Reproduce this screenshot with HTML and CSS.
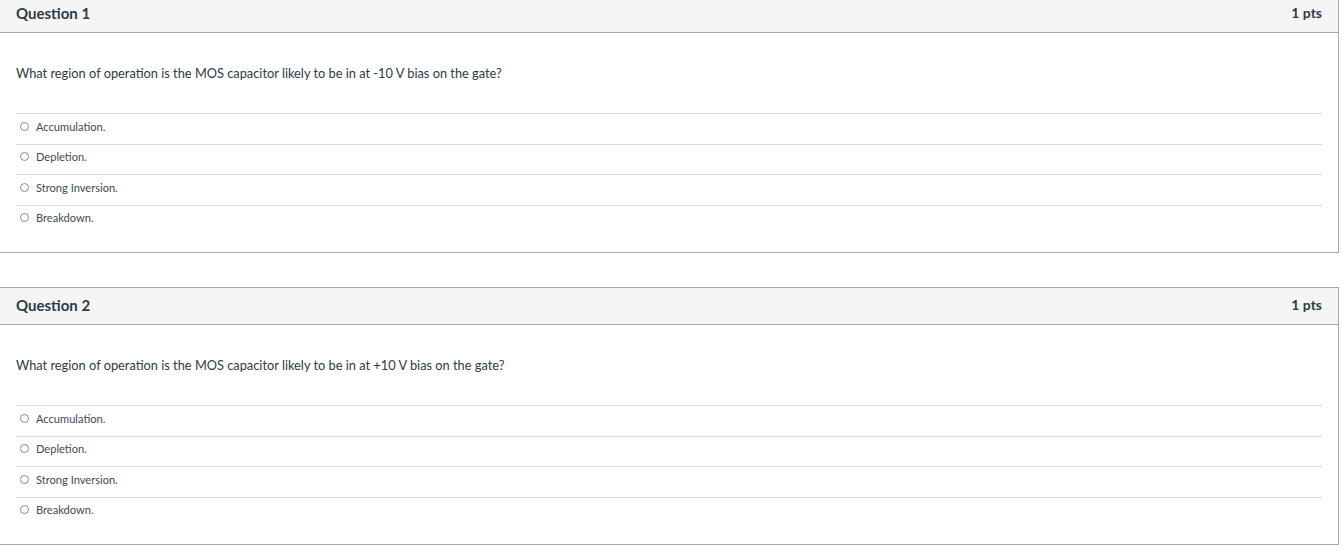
FILE: index.html
```html
<!DOCTYPE html>
<html>
<head>
<meta charset="utf-8">
<link rel="stylesheet" href="styles.css">
</head>
<body>
<div class="quiz">
  <div class="question first">
    <div class="q-header">
      <span class="q-name">Question 1</span>
      <span class="q-pts">1 pts</span>
    </div>
    <div class="q-body">
      <div class="q-text">What region of operation is the MOS capacitor likely to be in at -10 V bias on the gate?</div>
      <div class="answers">
        <div class="answer"><span class="radio"></span><span class="label">Accumulation.</span></div>
        <div class="answer"><span class="radio"></span><span class="label">Depletion.</span></div>
        <div class="answer"><span class="radio"></span><span class="label">Strong Inversion.</span></div>
        <div class="answer"><span class="radio"></span><span class="label">Breakdown.</span></div>
      </div>
    </div>
  </div>
  <div class="question">
    <div class="q-header">
      <span class="q-name">Question 2</span>
      <span class="q-pts">1 pts</span>
    </div>
    <div class="q-body">
      <div class="q-text">What region of operation is the MOS capacitor likely to be in at +10 V bias on the gate?</div>
      <div class="answers">
        <div class="answer"><span class="radio"></span><span class="label">Accumulation.</span></div>
        <div class="answer"><span class="radio"></span><span class="label">Depletion.</span></div>
        <div class="answer"><span class="radio"></span><span class="label">Strong Inversion.</span></div>
        <div class="answer"><span class="radio"></span><span class="label">Breakdown.</span></div>
      </div>
    </div>
  </div>
</div>
</body>
</html>
```
FILE: styles.css
```css
html, body {
  margin: 0;
  padding: 0;
  background: #ffffff;
}
body {
  font-family: Lato, "Open Sans", "Liberation Sans", sans-serif;
  color: #2d3b45;
  overflow: hidden;
}
.quiz {
  display: flex;
  flex-direction: column;
  gap: 34px;
  width: 1340px;
  margin-left: -1px;
  margin-top: -5px;
}
.question {
  border: 1px solid #a8a8a8;
  background: #fff;
}
.q-header {
  display: flex;
  justify-content: space-between;
  align-items: center;
  box-sizing: border-box;
  height: 37px;
  padding: 0 16px 3px 16px;
  background: #f5f5f5;
  border-bottom: 1px solid #a8a8a8;
  font-weight: 700;
  font-size: 15px;
  color: #2d3b45;
}
.q-pts {
  font-size: 14px;
}
.q-body {
  padding: 30px 16px 17px 16px;
}
.q-text {
  font-size: 12.8px;
  line-height: 20px;
  height: 20px;
  margin-bottom: 30px;
}
.answer {
  display: flex;
  align-items: center;
  box-sizing: border-box;
  height: 30.5px;
  padding-bottom: 5px;
  border-top: 1px solid #dcdcdc;
  font-size: 11.1px;
}
.radio {
  width: 9px;
  height: 9px;
  box-sizing: border-box;
  border: 1px solid #8c8c8c;
  border-radius: 50%;
  margin-left: 4px;
  margin-right: 7px;
  flex: none;
}
.label {
  color: #3d4b55;
}
```
